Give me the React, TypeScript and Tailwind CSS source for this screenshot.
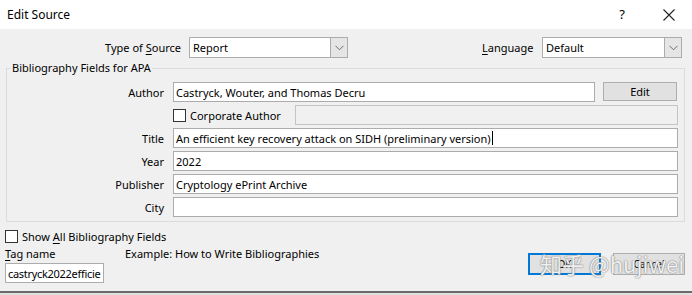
import React from 'react';

const Chevron = () => (
  <svg width="9" height="6" viewBox="0 0 9 6" fill="none">
    <path d="M0.5 0.8 L4.5 4.8 L8.5 0.8" stroke="#6b6b6b" strokeWidth="1" />
  </svg>
);

const Combo: React.FC<{ value: string; width: string }> = ({ value, width }) => (
  <div className={`${width} h-[21px] flex border border-[#acacac] bg-white`}>
    <div className="flex-1 pl-[3px] flex items-center">{value}</div>
    <div className="w-[17px] bg-[#e5e5e5] border-l border-[#acacac] flex items-center justify-center">
      <Chevron />
    </div>
  </div>
);

const Field: React.FC<{ children?: React.ReactNode; className?: string }> = ({ children, className }) => (
  <div className={`h-[20px] border border-[#acacac] bg-white flex items-center pl-[2px] whitespace-nowrap overflow-hidden ${className ?? ''}`}>
    {children}
  </div>
);

const Checkbox = () => <div className="w-[13px] h-[13px] border border-[#333] bg-white shrink-0" />;

const Row: React.FC<{ label: string; children: React.ReactNode }> = ({ label, children }) => (
  <div className="flex items-center h-[20px]">
    <div className="w-[157px] text-right shrink-0">{label}</div>
    <div className="ml-[9px] flex-1 flex">{children}</div>
  </div>
);

export default function App() {
  return (
    <div className="w-[692px] h-[295px] bg-[#f0f0f0] font-['Noto_Sans',sans-serif] text-[11px] leading-none text-black overflow-hidden relative flex flex-col">
      {/* Title bar */}
      <div className="h-[29px] bg-white flex items-center pl-[7px] shrink-0">
        <span className="text-[12px]">Edit Source</span>
        <span className="ml-auto mr-[38px] text-[13px]">?</span>
        <svg className="mr-[17px]" width="12" height="12" viewBox="0 0 12 12">
          <path d="M0.5 0.5 L11.5 11.5 M11.5 0.5 L0.5 11.5" stroke="#222" strokeWidth="1.1" />
        </svg>
      </div>

      {/* Type / Language */}
      <div className="mt-[8px] flex items-center h-[21px]">
        <div className="w-[181px] text-right">
          Type of <span className="underline underline-offset-2">S</span>ource
        </div>
        <div className="ml-[8px]">
          <Combo value="Report" width="w-[159px]" />
        </div>
        <div className="ml-[134px] w-[60px]">
          <span className="underline underline-offset-2">L</span>anguage
        </div>
        <Combo value="Default" width="w-[140px]" />
      </div>

      {/* Group */}
      <div className="mt-[10px] ml-[6px] w-[679px] h-[154px] border border-[#dcdcdc] relative shrink-0">
        <div className="absolute left-[4px] -top-[7px] px-[1px] bg-[#f0f0f0]">Bibliography Fields for APA</div>
        <div className="pt-[13px] pr-[6px] flex flex-col gap-[3px]">
          <Row label="Author">
            <Field className="w-[422px]">Castryck, Wouter, and Thomas Decru</Field>
            <button className="ml-[8px] w-[74px] h-[19px] bg-[#e1e1e1] border border-[#adadad]">Edit</button>
          </Row>
          <div className="flex items-center h-[20px] pl-[166px]">
            <Checkbox />
            <span className="ml-[4px]">Corporate Author</span>
            <div className="ml-auto w-[383px] h-[20px] border border-[#c4c4c4] bg-[#f0f0f0]" />
          </div>
          <Row label="Title">
            <Field className="flex-1">
              An efficient key recovery attack on SIDH (preliminary version)
              <span className="inline-block w-[1px] h-[14px] bg-black ml-[1px]" />
            </Field>
          </Row>
          <Row label="Year">
            <Field className="flex-1">2022</Field>
          </Row>
          <Row label="Publisher">
            <Field className="flex-1">Cryptology ePrint Archive</Field>
          </Row>
          <Row label="City">
            <Field className="flex-1" />
          </Row>
        </div>
      </div>

      {/* Show all */}
      <div className="mt-[6px] ml-[5px] flex items-center h-[16px]">
        <Checkbox />
        <span className="ml-[4px]">
          Show <span className="underline underline-offset-2">A</span>ll Bibliography Fields
        </span>
      </div>

      {/* Tag + buttons */}
      <div className="flex ml-[5px] mt-[1px]">
        <div className="flex flex-col">
          <div className="flex items-center h-[16px]">
            <span className="w-[120px]">
              <span className="underline underline-offset-2">T</span>ag name
            </span>
            <span>Example: How to Write Bibliographies</span>
          </div>
          <Field className="mt-[2px] w-[99px] tracking-[-0.3px]">castryck2022efficie</Field>
        </div>
        <div className="ml-auto mr-[7px] pt-[8px] flex gap-[12px]">
          <button className="w-[73px] h-[22px] bg-[#e1e1e1] border-2 border-[#0078d7] text-[10px]">OK</button>
          <button className="w-[72px] h-[22px] bg-[#e1e1e1] border border-[#adadad] text-[10px]">Cancel</button>
        </div>
      </div>

      <div className="mt-auto h-[4px] bg-[#e0e0e0] border-t-2 border-[#6a6a6a]" />

      {/* watermark */}
      <div className="absolute left-[540px] top-[252px] font-['Noto_Sans_CJK_SC',sans-serif] text-[22px] text-white/90 [text-shadow:0_0_1px_#666,0_0_2px_#999] whitespace-nowrap">
        知乎 @hujiwei
      </div>
    </div>
  );
}
